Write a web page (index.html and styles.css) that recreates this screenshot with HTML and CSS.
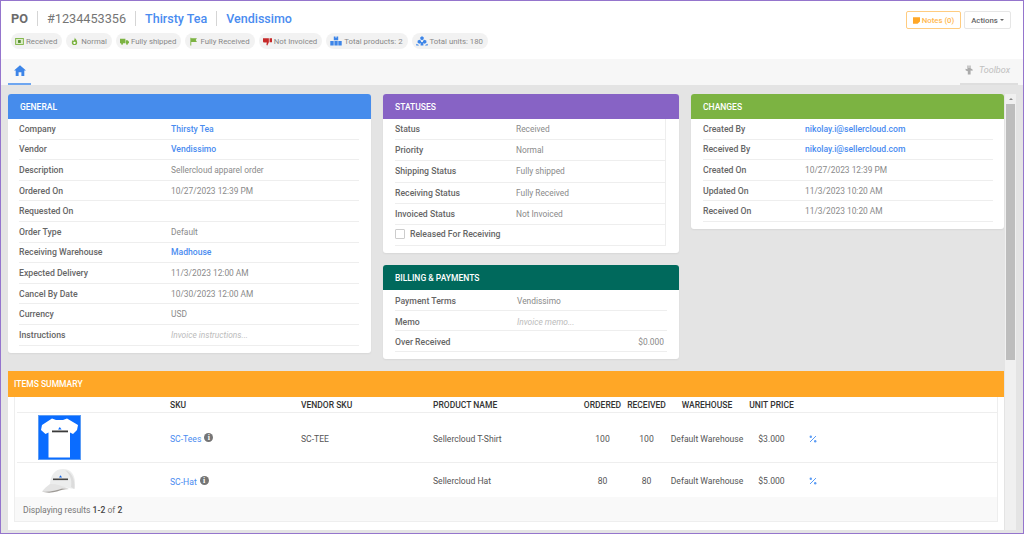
FILE: index.html
```html
<!DOCTYPE html>
<html lang="en">
<head>
    <meta charset="UTF-8" />
    <meta name="viewport" content="width=device-width, initial-scale=1" />
    <title>PO #1234453356</title>
    <link rel="stylesheet" href="styles.css">
</head>
<body>
<div class="app">
    <header class="top">
        <div class="top-main">
            <div class="title">
                <strong class="title-po">PO</strong>
                <span class="title-num">#1234453356</span>
                <a class="title-link">Thirsty Tea</a>
                <a class="title-link">Vendissimo</a>
            </div>
            <div class="chips">
                <span class="chip"><svg viewBox="0 0 10 10"><rect x="0.7" y="1.7" width="8.6" height="6.6" fill="#dcedc8" stroke="#7cb342" stroke-width="1"/><path d="M3.4 3.4h3v3.2h-3z" fill="#558b2f"/></svg>Received</span>
                <span class="chip"><svg viewBox="0 0 10 10"><path d="M5.2.5c.5 1.600 2.800 2.800 2.800 5.500a3 3 0 0 1-6 0c0-1.300.6-2.200 1.300-2.800l.4 1.300C4.700 3.600 5.400 2 5.200.5z" fill="#7cb342"/><circle cx="5" cy="6.500" r="1.300" fill="#fff"/></svg>Normal</span>
                <span class="chip"><svg viewBox="0 0 10 10"><path d="M0 2h6v5H0zM6.500 3.500h2L10 5.200V7H6.500z" fill="#7cb342"/><circle cx="2.300" cy="7.500" r="1.100" fill="#7cb342"/><circle cx="7.800" cy="7.500" r="1.100" fill="#7cb342"/></svg>Fully shipped</span>
                <span class="chip"><svg viewBox="0 0 10 10"><path d="M1.500.8h1v8.700h-1zM2.500 1.300H8.800L7.500 3.400l1.300 2.200H2.500z" fill="#7cb342"/></svg>Fully Received</span>
                <span class="chip"><svg viewBox="0 0 10 10"><path d="M0 1.500h6.500v4.300L4.800 9.500 3.800 9l.4-3H.6L0 5zM7.300 1.500H10v4.300H7.300z" fill="#c62828"/></svg>Not Invoiced</span>
                <span class="chip chip-wide"><svg viewBox="0 0 12 10"><path d="M3.800.5h1.700v1.200h1V.5h1.700v3.800H3.800zM.3 5h3.400v4.500H.3zM4.400 5h3.300v4.500H4.400zM8.300 5h3.400v4.500H8.300z" fill="#3d85e8"/></svg>Total products: 2</span>
                <span class="chip chip-wide"><svg viewBox="0 0 12 10"><path d="M6 .3l1.700 1v2L6 4.300l-1.700-1v-2zM3.300 3.800l1.700 1v2L3.300 7.800l-1.700-1v-2zM8.700 3.800l1.700 1v2L8.700 7.800 7 6.800v-2zM6 5.800l1.400.8v2.900H4.600V6.600zM.3 7.700l2.500 1.300v.5H.3zM11.700 7.700L9.200 9v.5h2.500z" fill="#3d85e8"/></svg>Total units: 180</span>
            </div>
        </div>
        <div class="top-actions">
            <button class="btn btn-notes"><svg viewBox="0 0 10 10"><path d="M0 .5h10v6L6.500 9.500H0z" fill="#ffa726"/></svg>Notes (0)</button>
            <button class="btn">Actions <i class="caret"></i></button>
        </div>
    </header>

    <nav class="tabs">
        <a class="tab-home"><svg viewBox="0 0 12 11"><path d="M6 .3L12 5.600h-1.700V11H7.400V7.300H4.600V11H1.700V5.600H0z" fill="#3d85e8"/></svg></a>
        <a class="tab-tool"><svg viewBox="0 0 10 12"><path d="M3 .5h1.500v3h1v-3H7v3.300l2.500 1.700v1.500L7 6.500v5H3.500v-4L1 6.500l-.5-2 2.500.5z" fill="#aaa"/></svg>Toolbox</a>
    </nav>

    <div class="body">
        <main class="scroll">
            <div class="cards">
                <section class="card card-general">
                    <h2 class="card-head head-blue">GENERAL</h2>
                    <div class="rows">
                        <div class="row"><b>Company</b><a>Thirsty Tea</a></div>
                        <div class="row"><b>Vendor</b><a>Vendissimo</a></div>
                        <div class="row"><b>Description</b><span>Sellercloud apparel order</span></div>
                        <div class="row"><b>Ordered On</b><span>10/27/2023 12:39 PM</span></div>
                        <div class="row"><b>Requested On</b><span></span></div>
                        <div class="row"><b>Order Type</b><span>Default</span></div>
                        <div class="row"><b>Receiving Warehouse</b><a>Madhouse</a></div>
                        <div class="row"><b>Expected Delivery</b><span>11/3/2023 12:00 AM</span></div>
                        <div class="row"><b>Cancel By Date</b><span>10/30/2023 12:00 AM</span></div>
                        <div class="row"><b>Currency</b><span>USD</span></div>
                        <div class="row"><b>Instructions</b><em>Invoice instructions...</em></div>
                    </div>
                </section>

                <div class="card-stack">
                    <section class="card card-status">
                        <h2 class="card-head head-purple">STATUSES</h2>
                        <div class="rows">
                            <div class="row"><b>Status</b><span>Received</span></div>
                            <div class="row"><b>Priority</b><span>Normal</span></div>
                            <div class="row"><b>Shipping Status</b><span>Fully shipped</span></div>
                            <div class="row"><b>Receiving Status</b><span>Fully Received</span></div>
                            <div class="row"><b>Invoiced Status</b><span>Not Invoiced</span></div>
                            <div class="row row-check"><i class="check"></i><b>Released For Receiving</b></div>
                        </div>
                    </section>
                    <section class="card card-billing">
                        <h2 class="card-head head-teal">BILLING &amp; PAYMENTS</h2>
                        <div class="rows">
                            <div class="row"><b>Payment Terms</b><span>Vendissimo</span></div>
                            <div class="row"><b>Memo</b><em>Invoice memo...</em></div>
                            <div class="row row-amount"><b>Over Received</b><span>$0.000</span></div>
                        </div>
                    </section>
                </div>

                <section class="card card-changes">
                    <h2 class="card-head head-green">CHANGES</h2>
                    <div class="rows">
                        <div class="row"><b>Created By</b><a>nikolay.i@sellercloud.com</a></div>
                        <div class="row"><b>Received By</b><a>nikolay.i@sellercloud.com</a></div>
                        <div class="row"><b>Created On</b><span>10/27/2023 12:39 PM</span></div>
                        <div class="row"><b>Updated On</b><span>11/3/2023 10:20 AM</span></div>
                        <div class="row"><b>Received On</b><span>11/3/2023 10:20 AM</span></div>
                    </div>
                </section>
            </div>

            <section class="items">
                <h2 class="card-head head-orange">ITEMS SUMMARY</h2>
                <div class="items-inner">
                    <table class="items-table">
                        <colgroup>
                            <col class="c-img"><col class="c-sku"><col class="c-vsku"><col class="c-name">
                            <col class="c-ord"><col class="c-rec"><col class="c-wh"><col class="c-price"><col>
                        </colgroup>
                        <thead>
                            <tr><th></th><th>SKU</th><th>VENDOR SKU</th><th>PRODUCT NAME</th><th class="mid">ORDERED</th><th class="mid">RECEIVED</th><th class="mid">WAREHOUSE</th><th class="mid">UNIT PRICE</th><th></th></tr>
                        </thead>
                        <tbody>
                            <tr class="tall">
                                <td class="pic">
                                    <svg class="tee" viewBox="0 0 43 45"><rect width="43" height="45" fill="#0a6cff"/><rect x=".5" y=".5" width="42" height="44" fill="none" stroke="#5b9cf5"/><path d="M14 3.500l4 1.500h7l4-1.500 11 6.500-1 5-3 3-1 1-3-1.500V42.500H10.500V17.500L7.500 19 3 15l1-5z" fill="#fff"/><rect x="14" y="15.500" width="16" height="1.800" fill="#3a3a3a"/><path d="M20 14.500l1.800-2.500 1.800 2.500z" fill="#0a6cff"/></svg>
                                </td>
                                <td><a>SC-Tees</a><i class="info">i</i></td>
                                <td>SC-TEE</td>
                                <td>Sellercloud T-Shirt</td>
                                <td class="mid">100</td>
                                <td class="mid">100</td>
                                <td class="mid">Default Warehouse</td>
                                <td class="mid">$3.000</td>
                                <td class="pct"><svg viewBox="0 0 8 8"><path d="M7 1L1 7" stroke="#5b9cf5" stroke-width="1"/><circle cx="1.800" cy="1.800" r="1.200" fill="#5b9cf5"/><circle cx="6.200" cy="6.200" r="1.200" fill="#5b9cf5"/></svg></td>
                            </tr>
                            <tr class="short">
                                <td class="pic">
                                    <svg class="hat" viewBox="0 0 38 28"><path d="M9 20C9 9 14 3 22 3c8 0 12 6 12 14 0 3 0 5-1 6l-16-3z" fill="#eceded"/><path d="M24 4c6 2 10 7 9.500 19L30 21c1-6 0-12-6-17z" fill="#dcdcdc"/><path d="M9 18c-3 2-6 5-8 7.500 6 1 15-1 20-3l7 .5c-5-3-12-5-19-5z" fill="#e4e4e4"/><path d="M1 25.500c6 1 14-1 20-3l7 .5c-5 0-8 1-12 2.500-5 1.500-11 1.500-15 0z" fill="#9e9b97"/><rect x="12" y="12.500" width="15" height="1.600" fill="#444"/><path d="M18 11.500l1.500-2.200 1.500 2.200z" fill="#1565e8"/></svg>
                                </td>
                                <td><a>SC-Hat</a><i class="info">i</i></td>
                                <td></td>
                                <td>Sellercloud Hat</td>
                                <td class="mid">80</td>
                                <td class="mid">80</td>
                                <td class="mid">Default Warehouse</td>
                                <td class="mid">$5.000</td>
                                <td class="pct"><svg viewBox="0 0 8 8"><path d="M7 1L1 7" stroke="#5b9cf5" stroke-width="1"/><circle cx="1.800" cy="1.800" r="1.200" fill="#5b9cf5"/><circle cx="6.200" cy="6.200" r="1.200" fill="#5b9cf5"/></svg></td>
                            </tr>
                        </tbody>
                    </table>
                    <div class="pager">Displaying results <b>1-2</b> of <b>2</b></div>
                </div>
            </section>
        </main>
        <div class="scrollbar"><i class="sb-up"></i><i class="sb-thumb"></i></div>
    </div>
</div>
</body>
</html>
```

FILE: styles.css
```css
* {
    box-sizing: border-box;
    margin: 0;
    padding: 0;
}

html, body {
    width: 1024px;
    height: 534px;
    overflow: hidden;
}

body {
    font-family: Roboto, 'Liberation Sans', sans-serif;
    font-size: 9px;
    color: #777;
    background: #fff;
}

a {
    color: #4a8cf0;
}

.app {
    height: 534px;
    display: flex;
    flex-direction: column;
    border: 1px solid #9575cd;
}

.top {
    height: 58px;
    flex: none;
    display: flex;
    justify-content: space-between;
    background: #fff;
    padding: 10px 12px 0 10px;
}

.title {
    display: flex;
    align-items: center;
    height: 15px;
    font-size: 12.7px;
    color: #757575;
}

.title-po {
    font-weight: 700;
    color: #6b6b6b;
    padding-right: 9px;
}

.title-num,
.title-link {
    border-left: 1px solid #d5d5d5;
    padding: 0 9px;
}

.title-link {
    color: #4a8cf0;
    font-size: 12.5px;
    font-weight: 500;
}

.chips {
    display: flex;
    gap: 4px;
    margin-top: 7px;
}

.chip {
    display: flex;
    align-items: center;
    gap: 2px;
    height: 16px;
    padding: 0 5px 0 4px;
    border-radius: 8px;
    background: #f2f2f2;
    color: #888;
    font-size: 7.8px;
}

.chip svg {
    width: 9px;
    height: 9px;
}

.chip-wide svg {
    width: 12px;
    height: 10px;
}

.top-actions {
    display: flex;
    gap: 3px;
    align-items: flex-start;
}

.btn {
    display: flex;
    align-items: center;
    justify-content: center;
    height: 18px;
    width: 47px;
    background: #fff;
    border: 1px solid #e6e6e6;
    border-radius: 2px;
    font-family: inherit;
    font-size: 7.8px;
    font-weight: 500;
    color: #666;
    gap: 2px;
}

.btn-notes {
    width: 55px;
    border-color: #ffcc80;
    color: #ffb74d;
}

.btn-notes svg {
    width: 7px;
    height: 7px;
}

.caret {
    border: 2.5px solid transparent;
    border-top-color: #666;
    border-bottom: 0;
}

.tabs {
    height: 26px;
    flex: none;
    display: flex;
    justify-content: space-between;
    background: #f7f7f7;
    padding: 0 5px 0 7px;
}

.tab-home {
    width: 23px;
    display: flex;
    align-items: center;
    justify-content: center;
    border-bottom: 2px solid #6ea6f0;
    padding-bottom: 2px;
}

.tab-home svg {
    width: 12px;
    height: 11px;
}

.tab-tool {
    width: 58px;
    display: flex;
    align-items: center;
    gap: 6px;
    padding: 0 0 2px 5px;
    border-bottom: 2px solid #dedede;
    color: #c0c0c0;
    font-style: italic;
    font-size: 9px;
}

.tab-tool svg {
    width: 8px;
    height: 10px;
}

.body {
    flex: 1;
    min-height: 0;
    display: flex;
    background: #e4e4e4;
    padding: 9px 6px 3px 7px;
    gap: 1px;
}

.scroll {
    width: 996px;
    flex: none;
    overflow: hidden;
}

.cards {
    display: grid;
    grid-template-columns: 363px 296px 313px;
    gap: 12px;
    align-items: start;
}

.card-stack {
    display: flex;
    flex-direction: column;
    gap: 12px;
}

.card {
    background: #fff;
    border-radius: 3px;
    overflow: hidden;
    box-shadow: 0 1px 2px rgba(0, 0, 0, 0.06);
}

.card-head {
    height: 25px;
    display: flex;
    align-items: center;
    padding: 1px 0 0 12px;
    font-size: 8.5px;
    font-weight: 500;
    color: #fff;
}

.head-blue { background: #468cec; }
.head-purple { background: #8763c5; }
.head-teal { background: #00695c; }
.head-green { background: #7cb342; }
.head-orange { background: #ffa726; padding-left: 6px; height: 26px; }

.rows {
    padding: 0 12px 7px 11px;
}

.row {
    display: flex;
    align-items: center;
    height: 20.6px;
    border-bottom: 1px solid #eee;
    font-size: 8.4px;
    color: #8a8a8a;
}

.row b {
    flex: none;
    width: 152px;
    font-size: 8.7px;
    color: #666;
    font-weight: 500;
}

.row a {
    font-size: 8.6px;
    font-weight: 500;
}

.row em {
    color: #bbb;
}

.card-status .rows {
    padding: 0 13px 7px 12px;
}

.card-status .row {
    height: 21.2px;
    border-right: 1px solid #eee;
}

.card-status .row b {
    width: 121px;
}

.card-status .row-check {
    padding-bottom: 2px;
}

.row-check b {
    width: auto;
}

.check {
    width: 10px;
    height: 10px;
    border: 1px solid #ccc;
    border-radius: 1px;
    margin-right: 5px;
}

.card-billing .rows {
    padding: 0 12px 7px;
}

.card-billing .row {
    padding-top: 2px;
}

.card-billing .row b {
    width: 122px;
}

.row-amount span {
    margin-left: auto;
    padding-right: 3px;
}

.card-changes .rows {
    padding: 0 11px 7px 12px;
}

.card-changes .row b {
    width: 102px;
}

.items {
    margin-top: 12px;
    background: #fff;
    height: 159px;
}

.items-inner {
    margin: 0 6px;
    border-right: 1px solid #eee;
    border-left: 1px solid #eee;
    border-bottom: 1px solid #eee;
}

.items-table {
    width: 981px;
    margin-left: 2px;
    border-collapse: collapse;
    table-layout: fixed;
    font-size: 8.6px;
    color: #555;
}

.c-img { width: 153px; }
.c-sku { width: 131px; }
.c-vsku { width: 132px; }
.c-name { width: 147px; }
.c-ord { width: 45px; }
.c-rec { width: 43px; }
.c-wh { width: 78px; }
.c-price { width: 51px; }

.items-table th {
    height: 16px;
    text-align: left;
    font-size: 8.5px;
    font-weight: 500;
    color: #333;
    border-bottom: 1px solid #eee;
}

.items-table td {
    vertical-align: middle;
    border-bottom: 1px solid #eee;
    padding-top: 2px;
}

.items-table .mid {
    text-align: center;
}

.items-table .tall td {
    height: 50px;
}

.items-table .short td {
    height: 34px;
    border-bottom: 0;
}

.items-table .pic {
    padding-top: 0;
}

.items-table a {
    color: #4a8cf0;
}

.pic {
    padding-left: 21px;
    line-height: 0;
}

.tee {
    width: 43px;
    height: 45px;
}

.hat {
    width: 38px;
    height: 28px;
    margin-left: 3px;
}

.info {
    display: inline-block;
    vertical-align: 2px;
    width: 9px;
    height: 9px;
    margin-left: 3px;
    border-radius: 50%;
    background: #757575;
    color: #fff;
    font-family: 'Liberation Serif', serif;
    font-size: 8px;
    font-weight: 700;
    font-style: normal;
    line-height: 9px;
    text-align: center;
}

.pct {
    padding-left: 12px;
}

.pct svg {
    width: 8px;
    height: 8px;
    display: block;
}

.pager {
    height: 24px;
    display: flex;
    align-items: center;
    gap: 0.25em;
    padding: 2px 0 0 8px;
    background: #f9f9f9;
    font-size: 8.6px;
    color: #777;
}

.pager b {
    color: #444;
    font-weight: 500;
}

.scrollbar {
    width: 11px;
    flex: none;
    background: #f0f0f0;
    display: flex;
    flex-direction: column;
    align-items: center;
}

.sb-up {
    margin: 4px 0;
    border: 2.5px solid transparent;
    border-bottom-color: #888;
    border-top: 0;
}

.sb-thumb {
    width: 9px;
    height: 256px;
    background: #bdbdbd;
}
```
